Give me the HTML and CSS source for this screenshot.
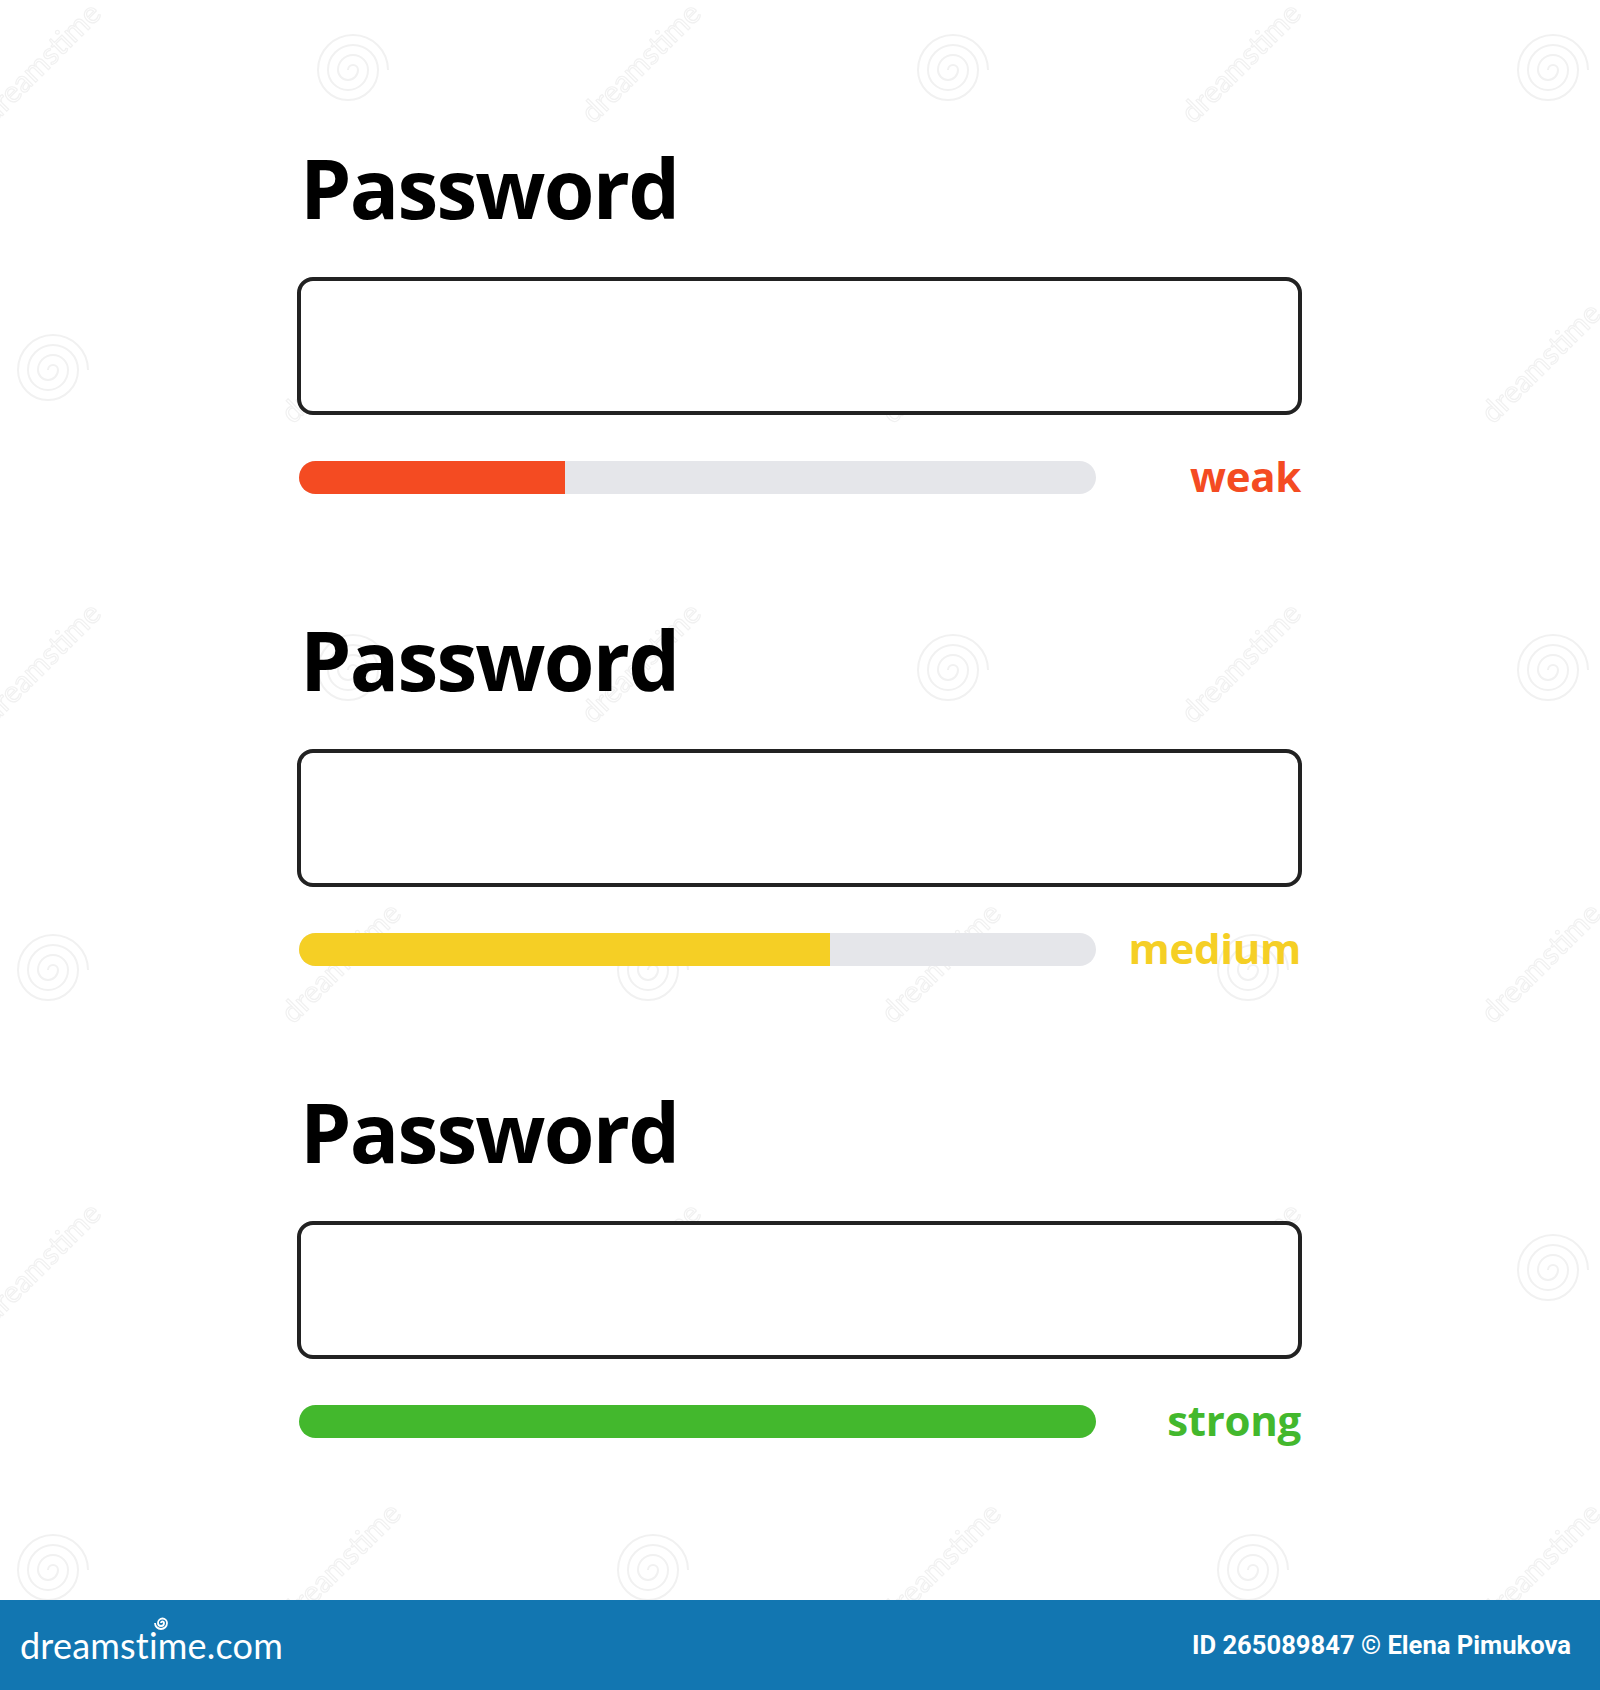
FILE: index.html
```html
<!DOCTYPE html>
<html lang="en">
<head>
  <meta charset="UTF-8">
  <meta name="viewport" content="width=device-width, initial-scale=1.0">
  <title>Password strength</title>
  <link rel="stylesheet" href="styles.css">
</head>
<body>
  <div class="page">
    <!-- faint stock watermark, tiled over the page -->
    <svg class="watermark" width="1600" height="1600" aria-hidden="true">
      <defs>
        <pattern id="wm" x="198" y="-80" width="600" height="600" patternUnits="userSpaceOnUse">
          <g class="spiral" transform="translate(150 150)">
            <path d="M0 0 A5 5 0 0 1 10 0 A10 10 0 0 1 -10 0 A15 15 0 0 1 20 0 A20 20 0 0 1 -20 0 A25 25 0 0 1 30 0 A30 30 0 0 1 -30 0 A35 35 0 0 1 40 0"/>
          </g>
          <g class="spiral" transform="translate(450 450)">
            <path d="M0 0 A5 5 0 0 1 10 0 A10 10 0 0 1 -10 0 A15 15 0 0 1 20 0 A20 20 0 0 1 -20 0 A25 25 0 0 1 30 0 A30 30 0 0 1 -30 0 A35 35 0 0 1 40 0"/>
          </g>
          <text class="wm-text" transform="translate(450 150) rotate(-45)" text-anchor="middle">dreamstime</text>
          <text class="wm-text" transform="translate(150 450) rotate(-45)" text-anchor="middle">dreamstime</text>
        </pattern>
      </defs>
      <rect width="1600" height="1600" fill="url(#wm)"/>
    </svg>

    <div class="forms">
      <div class="field">
        <h2>Password</h2>
        <div class="input-box"></div>
        <div class="meter-row">
          <div class="meter"><div class="meter-fill weak" style="width: 33.4%"></div></div>
          <span class="meter-label weak">weak</span>
        </div>
      </div>

      <div class="field">
        <h2>Password</h2>
        <div class="input-box"></div>
        <div class="meter-row">
          <div class="meter"><div class="meter-fill medium" style="width: 66.6%"></div></div>
          <span class="meter-label medium">medium</span>
        </div>
      </div>

      <div class="field">
        <h2>Password</h2>
        <div class="input-box"></div>
        <div class="meter-row">
          <div class="meter"><div class="meter-fill strong" style="width: 100%"></div></div>
          <span class="meter-label strong">strong</span>
        </div>
      </div>
    </div>
  </div>

  <footer class="footer">
    <div class="logo">
      <span class="logo-text">dreamstime.com</span>
      <svg class="logo-swirl" width="16" height="16" viewBox="-8 -8 16 16" aria-hidden="true">
        <path d="M0 0 A1.5 1.5 0 0 1 3 0 A3 3 0 0 1 -3 0 A4.5 4.5 0 0 1 6 0 A6 6 0 0 1 -6 0"/>
      </svg>
    </div>
    <div class="credit">ID 265089847 &copy; Elena Pimukova</div>
  </footer>
</body>
</html>
```

FILE: styles.css
```css
* {
  margin: 0;
  padding: 0;
  box-sizing: border-box;
}

body {
  font-family: "Open Sans", "Noto Sans", sans-serif;
  background-color: #fff;
  width: 1600px;
}

.page {
  position: relative;
  height: 1600px;
  padding: 146px 0 0 297px;
}

.watermark {
  position: absolute;
  top: 0;
  left: 0;
  pointer-events: none;
}

.spiral path {
  fill: none;
  stroke: #f1f1f1;
  stroke-width: 2;
}

.wm-text {
  font-family: "Lato", sans-serif;
  font-size: 30px;
  fill: none;
  stroke: #f1f1f1;
  stroke-width: 1.2;
}

.forms {
  position: relative;
  width: 1005px;
  display: flex;
  flex-direction: column;
  gap: 124px;
}

h2 {
  font-size: 82px;
  line-height: 82px;
  font-weight: 700;
  color: #000;
  letter-spacing: -1.8px;
  margin-left: 3px;
}

.input-box {
  margin-top: 49px;
  height: 138px;
  border: 4px solid #222;
  border-radius: 16px;
  background-color: #fff;
}

.meter-row {
  margin-top: 46px;
  display: flex;
  justify-content: space-between;
  align-items: center;
}

.meter {
  width: 797px;
  height: 33px;
  margin-left: 2px;
  border-radius: 17px;
  background-color: #e5e6ea;
  overflow: hidden;
}

.meter-fill {
  height: 100%;
}

.meter-fill.weak {
  background-color: #f44b22;
}

.meter-fill.medium {
  background-color: #f5cf25;
}

.meter-fill.strong {
  background-color: #43b82d;
}

.meter-label {
  font-size: 42px;
  line-height: 33px;
  font-weight: 700;
  letter-spacing: -0.3px;
  margin-right: 1px;
  position: relative;
  top: -2px;
}

.meter-label.weak {
  color: #f44b22;
}

.meter-label.medium {
  color: #f5cf25;
}

.meter-label.strong {
  color: #43b82d;
}

.footer {
  height: 90px;
  background-color: #1276b1;
  color: #fff;
  display: flex;
  justify-content: space-between;
  align-items: center;
  padding: 0 29px 0 20px;
}

.logo {
  position: relative;
}

.logo-text {
  font-family: "Lato", sans-serif;
  font-size: 36px;
  font-weight: 400;
  letter-spacing: 0.2px;
}

.logo-swirl {
  position: absolute;
  left: 133px;
  top: -8px;
}

.logo-swirl path {
  fill: none;
  stroke: #fff;
  stroke-width: 1.8;
}

.credit {
  font-family: "Roboto", sans-serif;
  font-size: 25.6px;
  font-weight: 700;
}
```
